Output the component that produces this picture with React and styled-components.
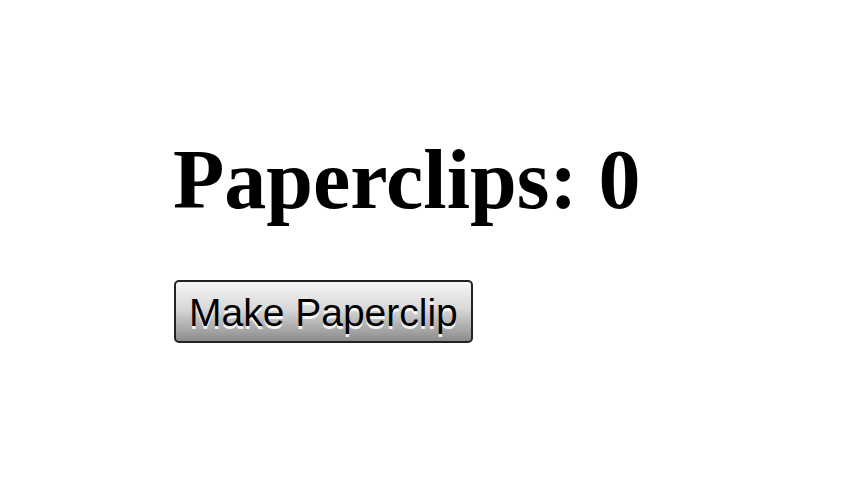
import React, { useState } from 'react';
import styled, { createGlobalStyle } from 'styled-components';

const GlobalStyle = createGlobalStyle`
  html, body {
    margin: 0;
    padding: 0;
    background: #ffffff;
  }
`;

const App = () => {
  const [paperclips, setPaperclips] = useState(0);

  return (
    <React.Fragment>
      <GlobalStyle />
      <PageLayout>
        <CounterH1>Paperclips: {paperclips}</CounterH1>
        <MakeButton onClick={() => setPaperclips(paperclips + 1)}>
          Make Paperclip
        </MakeButton>
      </PageLayout>
    </React.Fragment>
  );
};

export default App;

const PageLayout = styled.main`
  display: flex;
  flex-direction: column;
  align-items: flex-start;
  gap: 52px;
  padding: 132px 0 0 173px;
`;

const CounterH1 = styled.h1`
  margin: 0;
  font-family: 'Liberation Serif', 'Times New Roman', serif;
  font-size: 84px;
  font-weight: 700;
  line-height: 96px;
  color: #000;
`;

const MakeButton = styled.button`
  height: 63px;
  margin-left: 1px;
  padding: 2px 13px 0;
  border: 2px solid #222;
  border-radius: 5px;
  background: linear-gradient(#f6f6f6, #d8d8d8 45%, #8c8c8c);
  font-family: 'Liberation Sans', Arial, sans-serif;
  font-size: 39px;
  color: #000;
  text-shadow: 0 3px 0 rgba(255, 255, 255, 0.85);
  cursor: pointer;
`;
